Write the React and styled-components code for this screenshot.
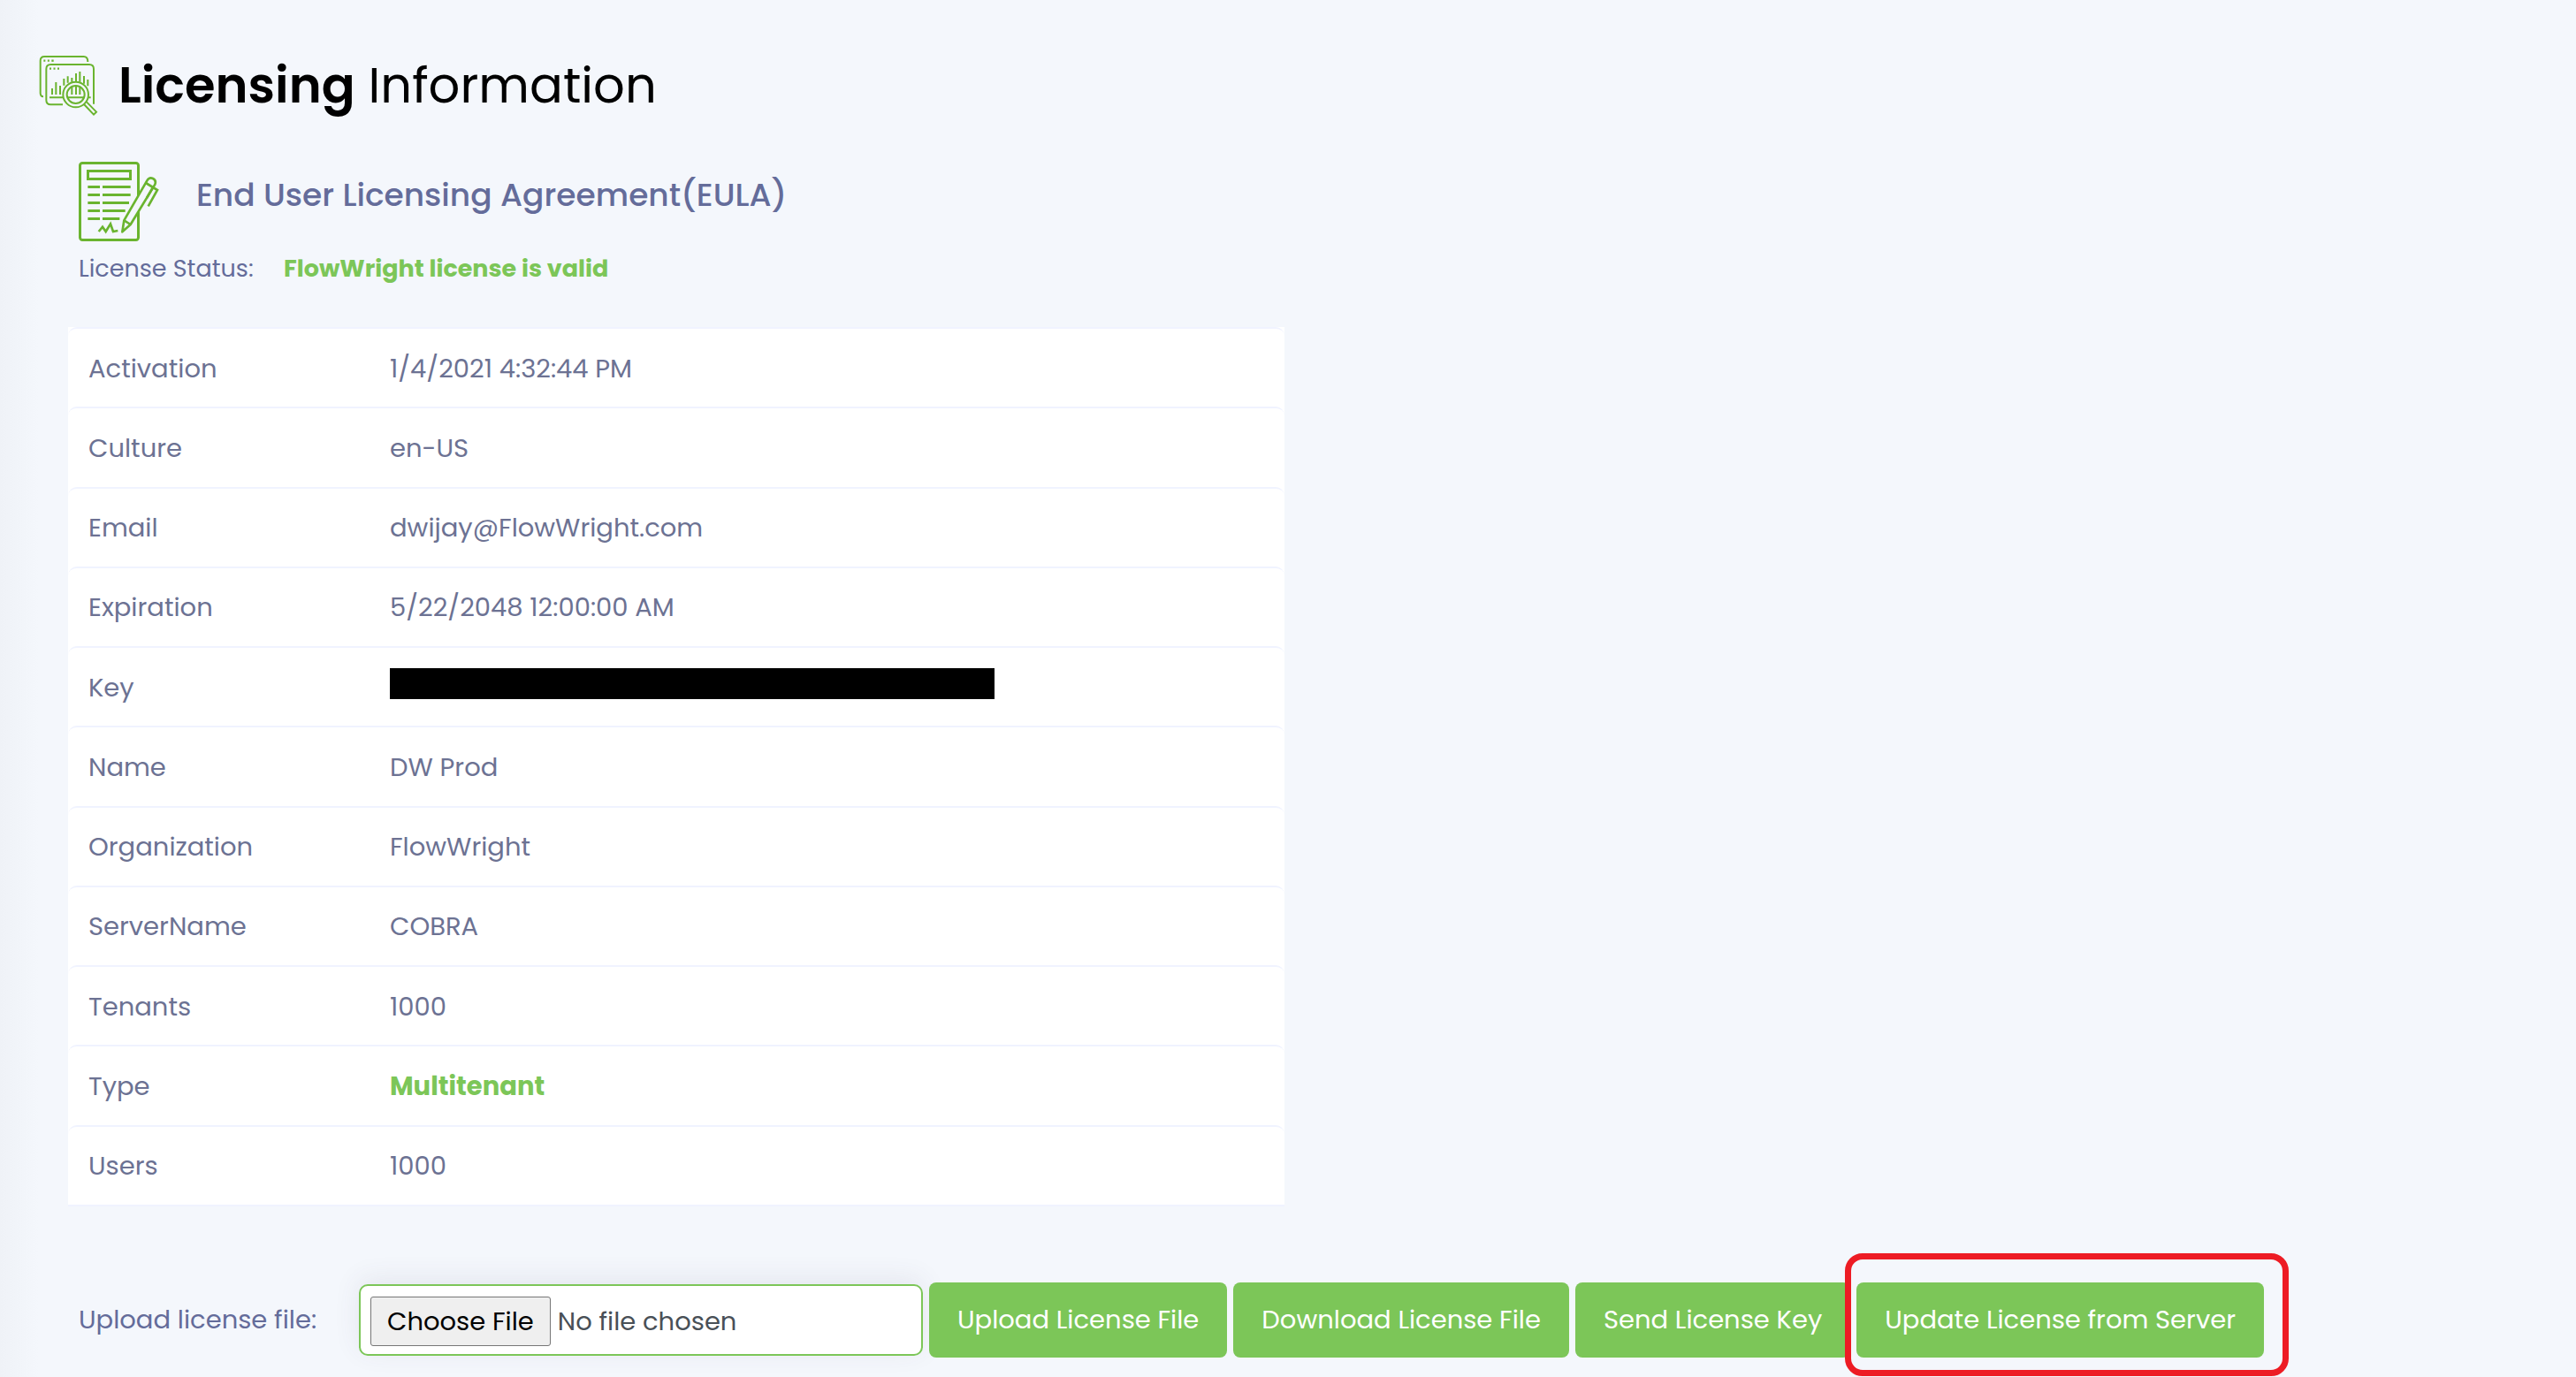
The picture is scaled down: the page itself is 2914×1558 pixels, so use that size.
import React from "react";
import styled, { createGlobalStyle } from "styled-components";

const colors = {
  page: "#f4f7fc",
  edge: "#eff2f7",
  white: "#ffffff",
  black: "#000000",
  green: "#7cc658",
  icon: "#6ab42f",
  heading: "#646c9a",
  text: "#6c7293",
  input: "#495057",
  line: "#f0f3ff",
  marker: "#ed1c24",
};

const GlobalStyle = createGlobalStyle`
  * {
    box-sizing: border-box;
  }
  body {
    margin: 0;
    min-height: 100vh;
    background: linear-gradient(to right, ${colors.edge}, ${colors.page} 44px);
    font-family: Poppins, Inter, sans-serif;
    font-size: 27px;
    color: ${colors.heading};
  }
`;

const Page = styled.main`
  padding: 62px 44px 20px;
`;
const PageHeader = styled.header`
  display: flex;
  align-items: center;
  gap: 22px;
  height: 70px;
`;
const PageTitle = styled.h1`
  margin: 0;
  color: ${colors.black};
  font-size: 56px;
  font-weight: 400;
  line-height: 70px;
`;
const TitleStrong = styled.span`
  font-weight: 600;
`;
const Icon = styled.svg`
  flex: none;
  width: ${(props) => props.$width}px;
  height: ${(props) => props.$height}px;
  fill: none;
  stroke: ${colors.icon};
`;

const Section = styled.section`
  padding-left: 33px;
`;
const EulaHeader = styled.div`
  display: flex;
  gap: 42px;
  margin: 51px 0 11px;
  padding-left: 12px;
`;
const EulaTitle = styled.h2`
  margin: 0;
  font-size: 36px;
  font-weight: 500;
  line-height: 76px;
`;
const StatusRow = styled.div`
  display: flex;
  padding-left: 12px;
  line-height: 40px;
`;
const StatusLabel = styled.span`
  min-width: 232px;
`;
const Highlight = styled.strong`
  color: ${colors.green};
  font-weight: 700;
`;

const LicenseTable = styled.table`
  width: 100%;
  max-width: 1376px;
  height: 995px;
  margin-top: 46px;
  border-collapse: separate;
  border-spacing: 0;
  border-bottom: 2px solid ${colors.line};
  background: ${colors.white};
  color: ${colors.text};
  font-size: 29px;
  table-layout: fixed;
`;
const NameCell = styled.th`
  width: 341px;
  padding: 2px 0 0 23px;
  border-top: 2px solid ${colors.line};
  border-top-left-radius: 10px;
  font-weight: 400;
  text-align: left;
`;
const ValueCell = styled.td`
  height: 90px;
  padding: 2px 23px 0;
  border-top: 2px solid ${colors.line};
  border-top-right-radius: 10px;
`;
const Redacted = styled.div`
  width: 684px;
  max-width: 100%;
  height: 35px;
  margin-bottom: 10px;
  background: ${colors.black};
`;

const UploadForm = styled.form`
  display: flex;
  align-items: center;
  gap: 7px;
  margin-top: 86px;
  padding-left: 12px;
  font-size: 29px;
`;
const UploadLabel = styled.label`
  flex: none;
  width: 310px;
`;
const FileInput = styled.input`
  flex: none;
  width: 638px;
  height: 81px;
  padding: 12px 11px;
  border: 2px solid ${colors.green};
  border-radius: 10px;
  background: ${colors.white};
  box-shadow: 0 -6px 30px rgba(82, 63, 105, 0.09);
  color: ${colors.input};
  font: inherit;

  &::file-selector-button {
    height: 56px;
    margin: 0 8px 0 0;
    padding: 0 18px;
    border: 1px solid #767676;
    border-radius: 3px;
    background: #efefef;
    color: ${colors.black};
    font: inherit;
  }
`;
const ActionButton = styled.button`
  flex: none;
  height: 85px;
  padding: 0 32px;
  border: 0;
  border-radius: 8px;
  background: ${colors.green};
  color: ${colors.white};
  font: inherit;
  white-space: nowrap;
`;
const Marked = styled.div`
  position: relative;
  display: flex;

  &::after {
    content: "";
    position: absolute;
    inset: -33px -28px -21px -13px;
    border: 7px solid ${colors.marker};
    border-radius: 20px;
    pointer-events: none;
  }
`;

const LicensingIcon = () => (
  <Icon $width={68} $height={70} viewBox="42 36 204 210" strokeWidth="6" aria-hidden="true">
    <path d="M57 178C50 178 47 173 47 166V56Q47 42 61 42H194Q208 42 208 60" />
    <path d="M123 205H82Q67 205 67 190V84Q67 69 82 69H213Q228 69 228 84V203" />
    <path d="M58 56H78M78 83H112" strokeWidth="7" strokeDasharray="6 7.5" />
    <path d="M85 56H92" strokeWidth="7" />
    <path d="M87 150V171M100 129V171M114 141V171M127 117V140M140 109V131M154 114V128M168 99V128M181 93V128M195 108V134M208 120V142" />
    <path d="M78 181H126M208 181H218" />
    <circle cx="167" cy="171" r="43" />
    <circle cx="167" cy="171" r="30" />
    <path d="M154 145V171M168 140V171M181 145V171M138 181H196" />
    <path d="M195 204L228 239L237 230L204 196" />
  </Icon>
);

const AgreementIcon = () => (
  <Icon $width={91} $height={90} viewBox="57 39 273 270" strokeWidth="9" aria-hidden="true">
    <rect x="61.5" y="43.5" width="198" height="261" rx="8" />
    <rect x="88.5" y="70.5" width="144" height="27" />
    <path d="M88 124.5H129M138 124.5H233M88 151.5H129M138 151.5H233M88 178.5H129M138 178.5H228M88 205.5H129M138 205.5H215M88 232.5H129M138 232.5H196" />
    <path d="M125 276L138 260L149 276L165 250L174 276L190 273" strokeWidth="8" />
    <path
      d="M205 277L211 238L289 103Q297 90 309 96Q321 102 316 116L233 252Z"
      fill={colors.page}
      strokeWidth="8"
      strokeLinejoin="round"
    />
    <path d="M211 238L233 252M285 111L324 135L293 190M309 126L288 162" strokeWidth="8" />
  </Icon>
);

const license = [
  { name: "Activation", value: "1/4/2021 4:32:44 PM" },
  { name: "Culture", value: "en-US" },
  { name: "Email", value: "dwijay@FlowWright.com" },
  { name: "Expiration", value: "5/22/2048 12:00:00 AM" },
  { name: "Key", value: <Redacted /> },
  { name: "Name", value: "DW Prod" },
  { name: "Organization", value: "FlowWright" },
  { name: "ServerName", value: "COBRA" },
  { name: "Tenants", value: "1000" },
  { name: "Type", value: <Highlight>Multitenant</Highlight> },
  { name: "Users", value: "1000" },
];

const App = () => {
  return (
    <Page>
      <GlobalStyle />
      <PageHeader>
        <LicensingIcon />
        <PageTitle>
          <TitleStrong>Licensing</TitleStrong> Information
        </PageTitle>
      </PageHeader>
      <Section>
        <EulaHeader>
          <AgreementIcon />
          <EulaTitle>End User Licensing Agreement(EULA)</EulaTitle>
        </EulaHeader>
        <StatusRow>
          <StatusLabel>License Status:</StatusLabel>
          <Highlight>FlowWright license is valid</Highlight>
        </StatusRow>
        <LicenseTable>
          <tbody>
            {license.map((item) => (
              <tr key={item.name}>
                <NameCell scope="row">{item.name}</NameCell>
                <ValueCell>{item.value}</ValueCell>
              </tr>
            ))}
          </tbody>
        </LicenseTable>
        <UploadForm>
          <UploadLabel htmlFor="license-file">Upload license file:</UploadLabel>
          <FileInput id="license-file" type="file" />
          <ActionButton type="button">Upload License File</ActionButton>
          <ActionButton type="button">Download License File</ActionButton>
          <ActionButton type="button">Send License Key</ActionButton>
          <Marked>
            <ActionButton type="button">Update License from Server</ActionButton>
          </Marked>
        </UploadForm>
      </Section>
    </Page>
  );
};

export default App;
